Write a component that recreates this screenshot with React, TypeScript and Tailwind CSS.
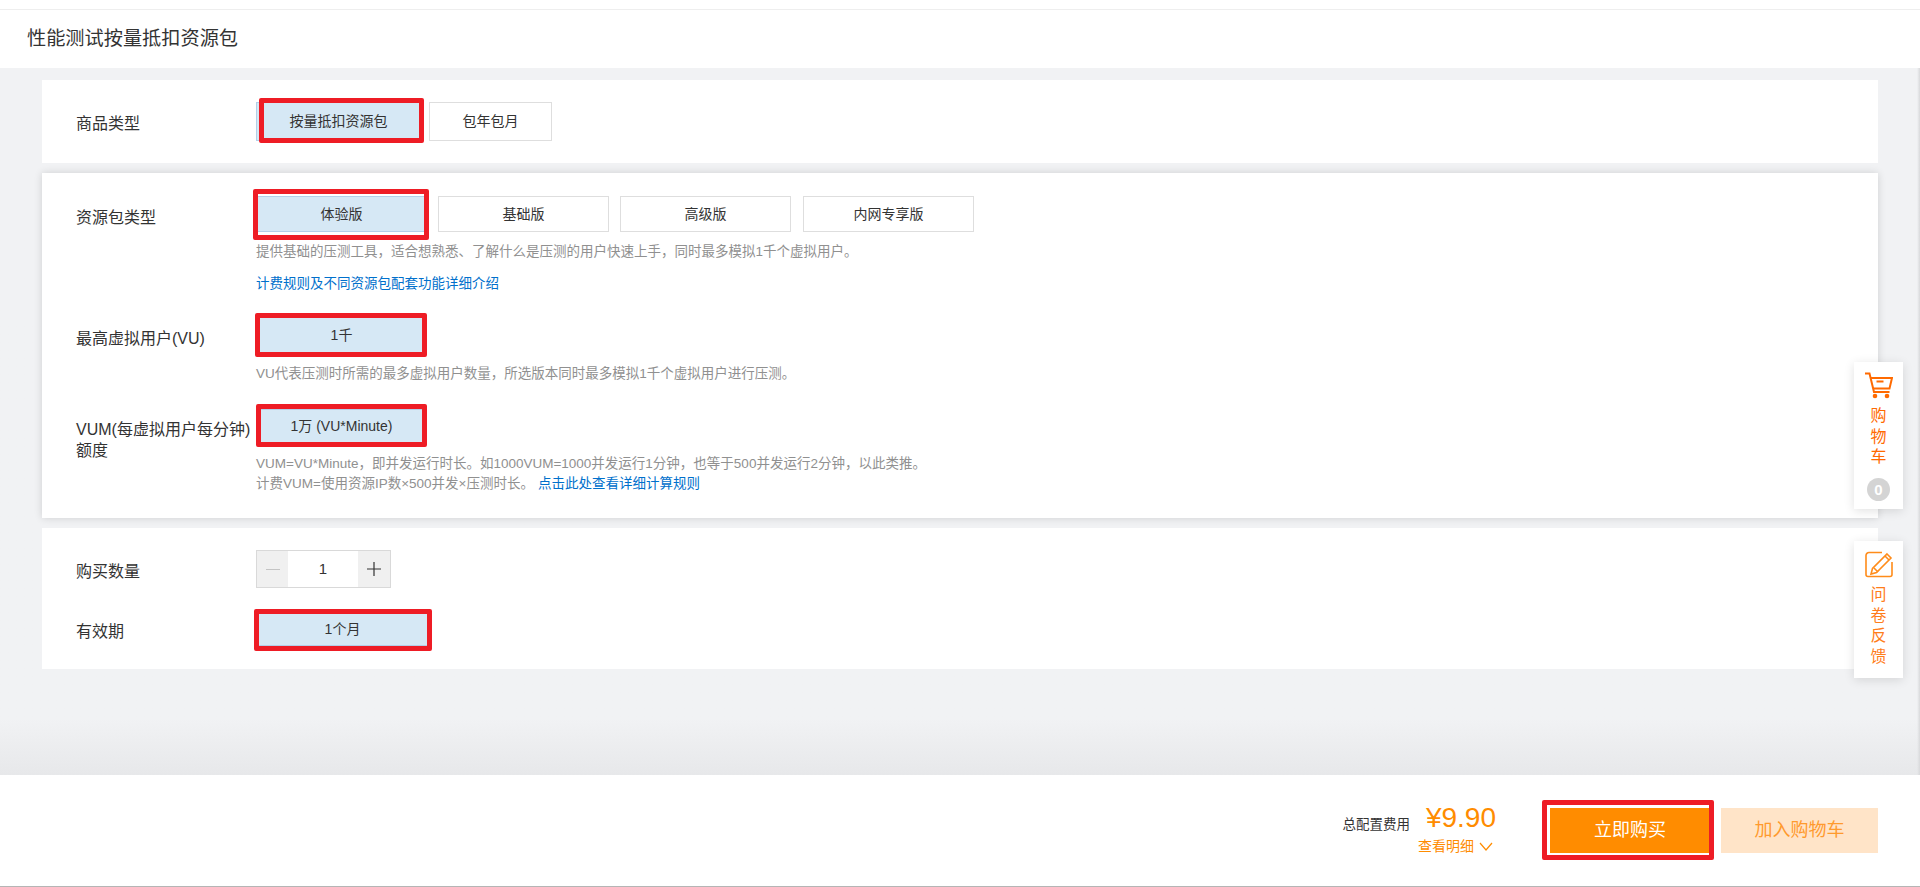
import React from "react";

const font = { fontFamily: '"Liberation Sans", "Noto Sans CJK SC", sans-serif' };

function Option({ children, selected, className = "", mark = "" }: { children: React.ReactNode; selected?: boolean; className?: string; mark?: string }) {
  return (
    <div className={`relative flex items-center justify-center border text-[14px] text-[#333] ${selected ? "border-[#b4cfe8] bg-[#d6e8f5]" : "border-[#dedede] bg-white"} ${className}`}>
      {children}
      {mark && <span className={`absolute rounded-[2px] border-[5px] border-[#ee1c25] ${mark}`} />}
    </div>
  );
}

function Label({ children, className = "" }: { children: React.ReactNode; className?: string }) {
  return <div className={`w-[180px] shrink-0 pr-1 text-[16px] leading-[21px] text-[#333] ${className}`}>{children}</div>;
}

function Hint({ children, className = "" }: { children: React.ReactNode; className?: string }) {
  return <div className={`text-[13.5px] leading-[20px] text-[#909090] ${className}`}>{children}</div>;
}

export default function App() {
  return (
    <div style={font} className="flex h-[887px] w-[1920px] flex-col overflow-hidden bg-[#f1f2f4]">
      <div className="h-[10px] shrink-0 border-b border-[#eeeeee] bg-white" />
      <div className="flex h-[58px] shrink-0 items-center bg-white pl-[27px] text-[19.2px] text-[#333]">性能测试按量抵扣资源包</div>

      <main className="relative flex min-h-0 flex-1 flex-col bg-gradient-to-b from-[#f1f2f4] from-[92%] to-[#e7e8ea] px-[42px] pt-[12px]">
        <section className="flex h-[83px] bg-white pl-[34px] pt-[22px]">
          <Label className="pt-[11px]">商品类型</Label>
          <div className="flex h-[39px] gap-[8px]">
            <Option selected className="w-[165px]" mark="left-[2px] -right-[4px] -top-[5px] -bottom-[3px]">按量抵扣资源包</Option>
            <Option className="w-[123px] border-[#cccccc]">包年包月</Option>
          </div>
        </section>

        <section className="mt-[10px] h-[345px] bg-white pl-[34px] pt-[23px] shadow-[0_0_8px_rgba(0,0,0,0.14)]">
          <div className="flex">
            <Label className="pt-[11px]">资源包类型</Label>
            <div>
              <div className="flex h-[36px] gap-[11px]">
                <Option selected className="w-[171px]" mark="-left-[4px] -right-[3px] -top-[8px] -bottom-[9px]">体验版</Option>
                <Option className="w-[171px]">基础版</Option>
                <Option className="w-[171px]">高级版</Option>
                <Option className="ml-[1px] w-[171px]">内网专享版</Option>
              </div>
              <Hint className="mt-[10px]">提供基础的压测工具，适合想熟悉、了解什么是压测的用户快速上手，同时最多模拟1千个虚拟用户。</Hint>
              <div className="mt-[12px] text-[13.5px] leading-[20px] text-[#0070cc]">计费规则及不同资源包配套功能详细介绍</div>
            </div>
          </div>

          <div className="mt-[23px] flex">
            <Label className="pt-[11px]">最高虚拟用户(VU)</Label>
            <div>
              <Option selected className="h-[36px] w-[171px]" mark="-left-[2px] -right-[1px] -top-[5px] -bottom-[5px]">1千</Option>
              <Hint className="mt-[11px]">VU代表压测时所需的最多虚拟用户数量，所选版本同时最多模拟1千个虚拟用户进行压测。</Hint>
            </div>
          </div>

          <div className="mt-[25px] flex">
            <Label className="pt-[10px]">VUM(每虚拟用户每分钟)额度</Label>
            <div>
              <Option selected className="h-[34px] w-[171px]" mark="-left-[1px] -right-[1px] -top-[6px] -bottom-[5px]">1万 (VU*Minute)</Option>
              <Hint className="mt-[11px]">VUM=VU*Minute，即并发运行时长。如1000VUM=1000并发运行1分钟，也等于500并发运行2分钟，以此类推。</Hint>
              <Hint>
                计费VUM=使用资源IP数×500并发×压测时长。
                <span className="ml-[4px] text-[#0070cc]">点击此处查看详细计算规则</span>
              </Hint>
            </div>
          </div>
        </section>

        <section className="mt-[10px] h-[141px] bg-white pl-[34px] pt-[22px]">
          <div className="flex">
            <Label className="pt-[11px]">购买数量</Label>
            <div className="flex h-[38px] w-[135px] items-stretch border border-[#d9d9d9] text-[15px] text-[#333]">
              <div className="flex w-[31px] items-center justify-center bg-[#f0f0f0]">
                <span className="h-px w-[14px] bg-[#c4c4c4]" />
              </div>
              <div className="flex flex-1 items-center justify-center bg-white">1</div>
              <div className="flex w-[32px] items-center justify-center bg-[#f0f0f0]">
                <svg width="14" height="14" viewBox="0 0 14 14"><path d="M7 0v14M0 7h14" stroke="#333" strokeWidth="1.2" /></svg>
              </div>
            </div>
          </div>
          <div className="mt-[25px] flex">
            <Label className="pt-[8px]">有效期</Label>
            <Option selected className="h-[33px] w-[173px]" mark="-left-[3px] -right-[4px] -top-[5px] -bottom-[6px]">1个月</Option>
          </div>
        </section>

        <aside className="absolute right-[17px] top-[294px] flex h-[147px] w-[49px] flex-col items-center bg-white pt-[10px] text-[#ff6a00] shadow-[0_2px_10px_rgba(0,0,0,0.12)]">
          <svg width="28" height="27" viewBox="0 0 28 27" fill="none" stroke="#ff6a00" strokeWidth="2">
            <path d="M0 1.5h4.5L9 20h15.5" />
            <path d="M5.5 6H27l-2.5 10.5H8" />
            <path d="M11.5 9.5h7" />
            <circle cx="10" cy="24" r="2.3" fill="#ff6a00" stroke="none" />
            <circle cx="22" cy="24" r="2.3" fill="#ff6a00" stroke="none" />
          </svg>
          <div className="mt-[7px] w-[16px] text-[16px] leading-[20.5px]">购物车</div>
          <div className="mt-[10px] flex h-[23px] w-[23px] items-center justify-center rounded-full bg-[#d4d4d4] text-[15px] font-bold leading-none text-white">0</div>
        </aside>

        <aside className="absolute right-[17px] top-[473px] flex h-[137px] w-[49px] flex-col items-center bg-white pt-[10px] text-[#ff7d1a] shadow-[0_2px_10px_rgba(0,0,0,0.12)]">
          <svg width="28" height="27" viewBox="0 0 28 27" fill="none" stroke="#ff8c1a" strokeWidth="1.6">
            <path d="M17 1.5H4a3 3 0 0 0-3 3v19a2 2 0 0 0 2 2h22a2 2 0 0 0 2-2V11" />
            <path d="M22 3l4 4-14.5 14.5L6 23l1.5-5.5z" />
            <path d="M20 5l4 4M9 17l4 4" />
          </svg>
          <div className="mt-[7px] w-[16px] text-[16px] leading-[20.5px]">问卷反馈</div>
        </aside>

        <div className="pointer-events-none absolute inset-y-0 right-0 w-[3px] bg-gradient-to-r from-transparent to-[#d8d9db]" />
      </main>

      <footer className="flex h-[112px] shrink-0 items-start justify-end border-b border-[#b5b5b5] bg-white pr-[42px] pt-[33px]">
        <div className="mt-[7px] mr-[9px] text-[13.5px] leading-[20px] text-[#333]">总配置费用</div>
        <div className="-mt-[8px] mr-[57px] flex w-[74px] flex-col items-end text-[#ff8c00]">
          <div className="-mr-[3px] text-[28px] leading-[36px]">¥9.90</div>
          <div className="flex items-center whitespace-nowrap text-[14px] leading-[20px]">
            查看明细
            <svg className="ml-[5px]" width="14" height="9" viewBox="0 0 14 9" fill="none" stroke="#ff8c00" strokeWidth="1.2"><path d="M1 1l6 7 6-7" /></svg>
          </div>
        </div>
        <div className="relative flex h-[45px] w-[160px] items-center justify-center bg-[#ff8c00] text-[18px] text-white">
          立即购买
          <span className="absolute -left-[8px] -right-[4px] -top-[8px] -bottom-[7px] rounded-[2px] border-[5px] border-[#ee1c25]" />
        </div>
        <div className="ml-[11px] flex h-[45px] w-[157px] items-center justify-center bg-[#ffe4c8] text-[18px] text-[#ff9a2e]">加入购物车</div>
      </footer>
    </div>
  );
}
